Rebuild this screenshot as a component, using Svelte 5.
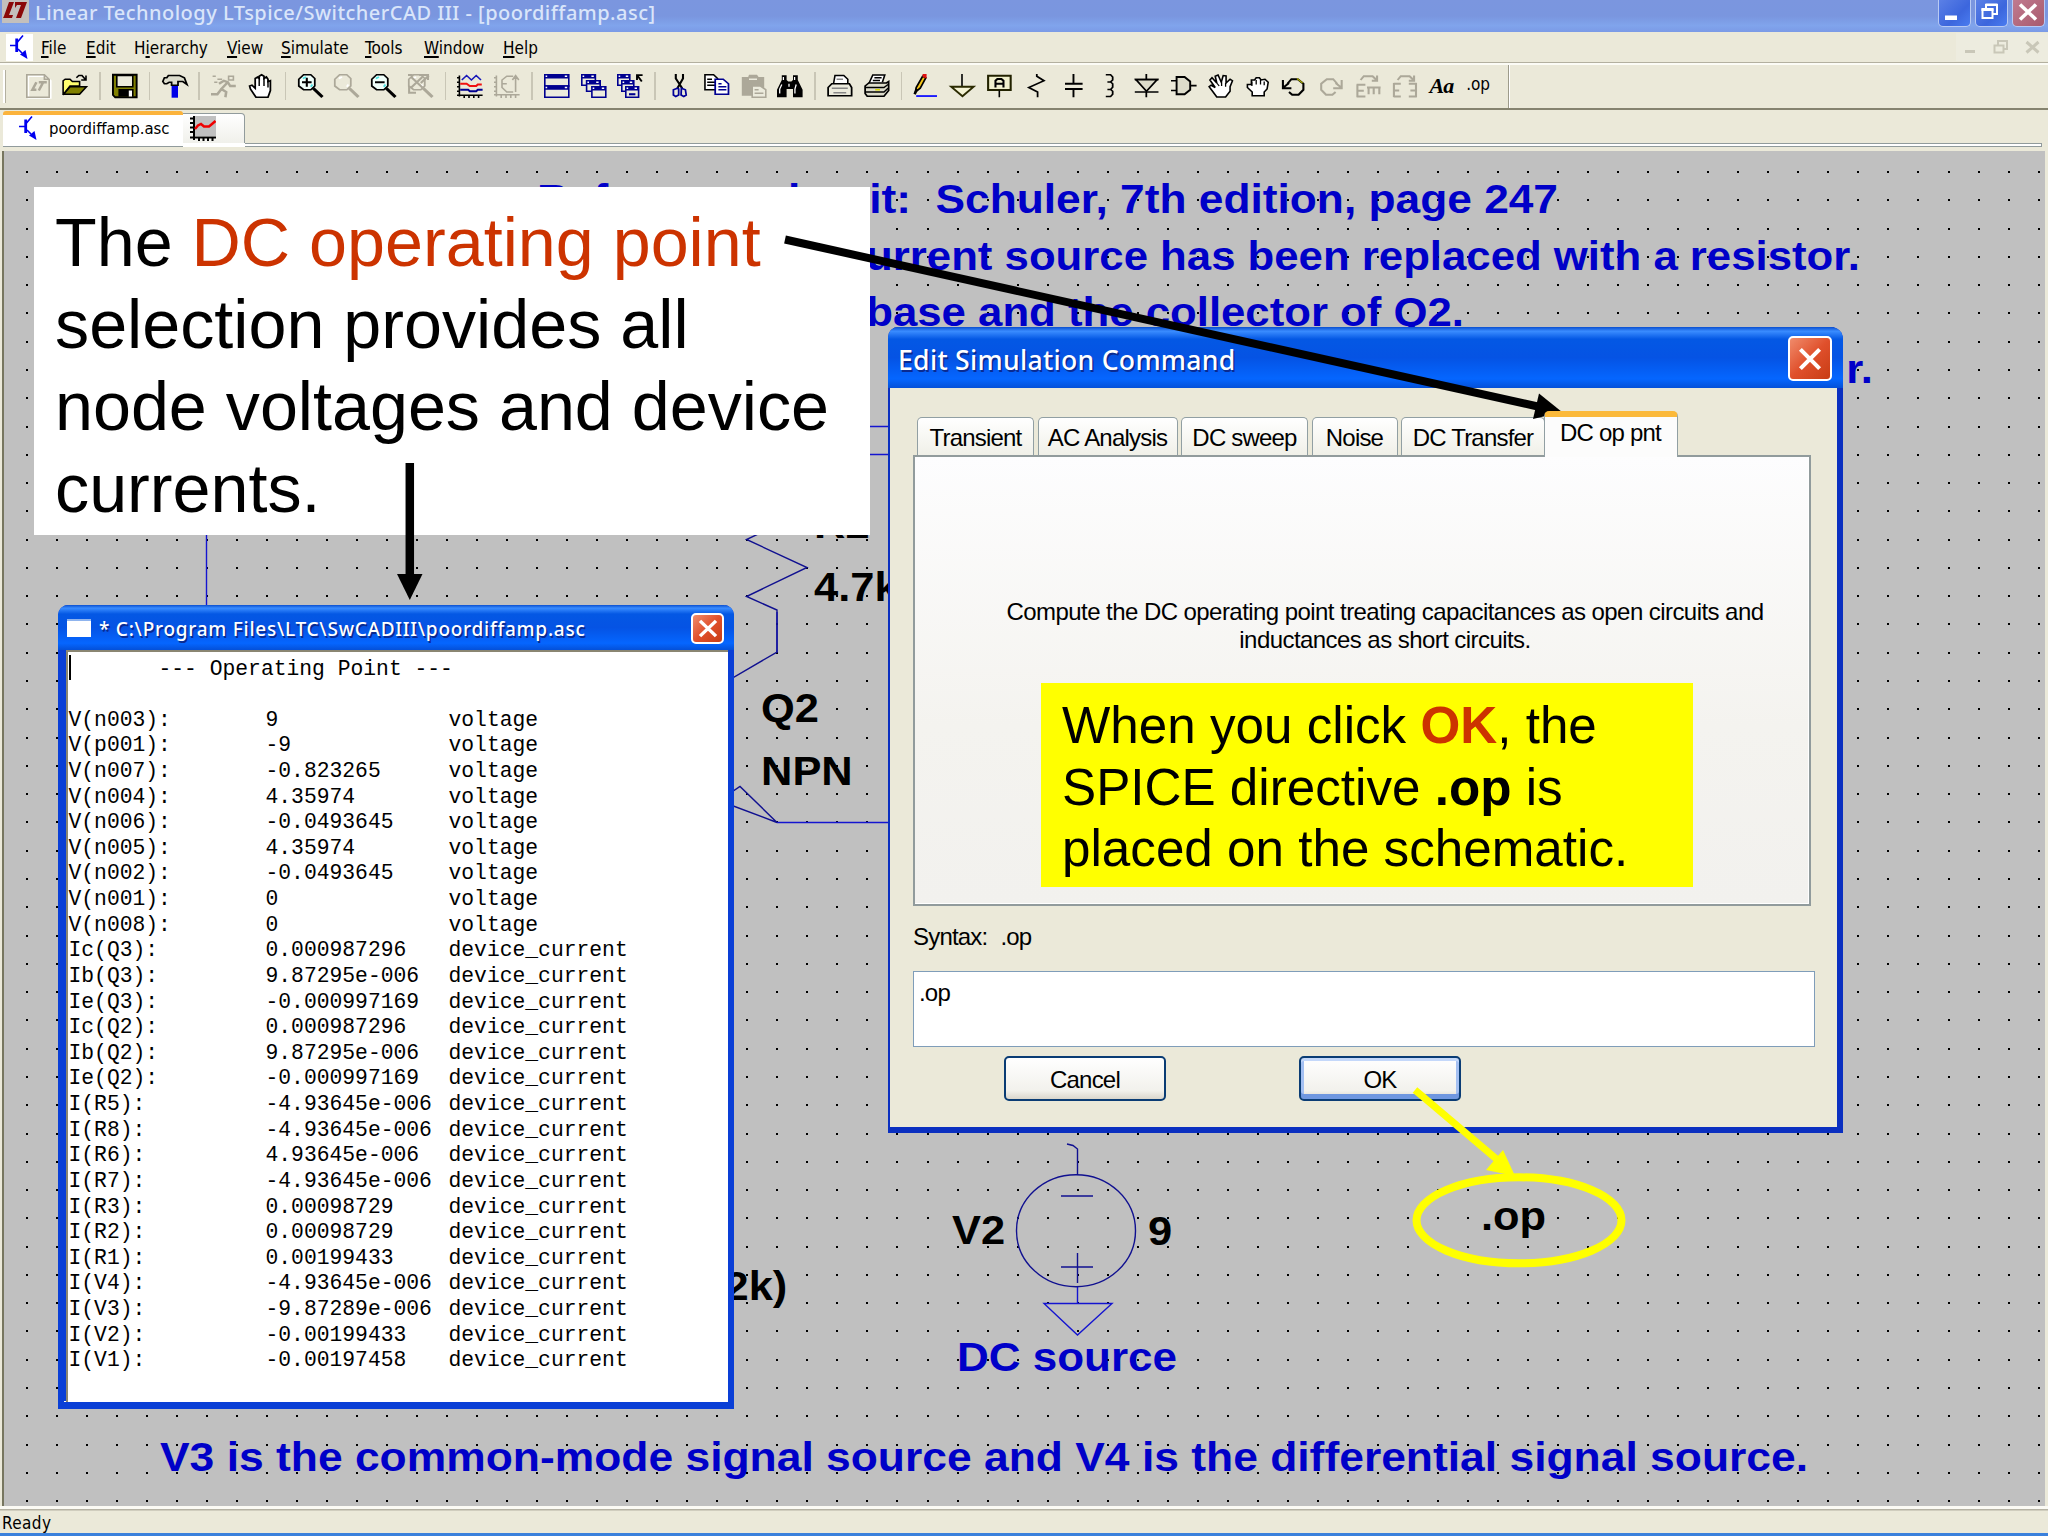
<script lang="ts">
    interface Shape {
        d: string,
        f?: string,
        s?: string,
        w?: number,
    }

    const GRAY = "#aca899";
    const NAVY = "#000090";
    const LENS = "M5.5 .5H8L10.5 3V8L8 10.5H3.5L.5 8V3.5L3.5 .5Z";

    // a small window frame with a solid caption
    function frame(x: number, y: number, w: number, h: number): Shape[] {
        return [
            { d: `M${x} ${y}h${w}v${h}h${-w}z`, f: NAVY },
            { d: `M${x + 1} ${y + 3}h${w - 2}v${h - 4}h${2 - w}z`, f: "#ecebdd" },
            { d: `M${x + 1} ${y + 1}h1v1h-1zM${x + w - 3} ${y + 1}h1.5v1h-1.5z`, f: "#fff" },
        ];
    }

    function lens(color: string, fill: string, mark: string): Shape[] {
        return [
            { d: LENS, f: fill, s: color, w: 1.1 },
            { d: "M3 3L5 2M8 8.5L9 7", s: fill == "none" ? "#fff" : "#4fe0e0", w: 1.2 },
            { d: mark, s: color, w: 1.3 },
            { d: "M9.5 9.5L15.3 15.3", s: color, w: 2 },
        ];
    }

    // all glyphs sit on a 16 x 16 grid
    const icons: Record<string, Shape[]> = {
        new: [
            { d: "M1.5 1.5H12.5L15.5 4.5V16H1.5Z", s: "#fff" },
            { d: "M.5 .5H11.5L14.5 3.5V15.5H.5ZM11.5 .5V3.5H14.5", s: GRAY },
            { d: "M6.5 5.5L4 10.5H6.5M8 5.5H13M10.5 6L8 11", s: GRAY, w: 1.6 },
        ],
        open: [
            { d: "M.7 13V4.5L2 3.5H5L6.5 5H11V8H5L1 13.5Z", f: "#ffff70", s: "#000" },
            { d: "M1 13.5L5 8.5H15.3L11 13.5Z", f: "#808000", s: "#000" },
            { d: "M9 2.5L10.5 1H12.5L14.5 3.5M12 4H15V1", s: "#000" },
        ],
        save: [
            { d: "M.6 .5H15.4V15.5H2L.6 14Z", f: "#808000", s: "#000", w: 1.2 },
            { d: "M3 1H13V8.5H3Z", f: "#ecebdd", s: "#000" },
            { d: "M4 10H13.5V15H4Z", f: "#000" },
            { d: "M10.5 11H12.5V15H10.5Z", f: "#fff" },
        ],
        hammer: [
            { d: "M.5 5L1.5 2.5H3L4 1H11L14 2.5L15.6 7L13 5H10V7.5H6V5.5H4.5L3 6.5H1.5Z", f: "#dcdccc", s: "#000", w: 1.1 },
            { d: "M6 8H10V15.8H6Z", f: "#0000e8" },
        ],
        run: [
            { d: "M11 1.5H14V4H11ZM1 1.5H3M4 3.5H7M2 5.5H4", s: GRAY },
            { d: "M5 6.5L8 4.5L10.5 5.5L12 8H15.5M10 6L6.5 10L9.5 12L9 15.5M6.5 10L4 13.5H0", s: GRAY, w: 1.6 },
        ],
        hand: [
            { d: "M5 15.5L1.5 10L1 8L2.5 7.5L4.5 9.5V3L6 2L7 3V1.5L8.5 .5L10 1.5V3L11.5 2L12.5 3.5V5L14 4.5V11L12.5 15.5Z", f: "#fff", s: "#000", w: 1.1 },
            { d: "M7 3V8M10 3V8M12.5 4.5V9", s: "#000", w: .9 },
        ],
        zoomin: lens("#000", "#f0fffa", "M5.5 2.5V8.5M2.5 5.5H8.5"),
        zoomfull: lens(GRAY, "none", "M0 0"),
        zoomout: lens("#000", "#f0fffa", "M2.5 5.5H8.5"),
        zoomfit: [...lens(GRAY, "none", "M2 2L9 9M9 2L2 9"), { d: "M0 .7H3M7 .7H12.5V4M.7 8V12.5H5M8 6L13 1", s: GRAY, w: 1.3 }],
        wave: [
            { d: "M1.5 1V15M0 14.2H16M0 2.5H2M0 5.5H2M0 8.5H2M0 11.5H2M4.5 14V16M7.5 14V16M10.5 14V16M13.5 14V16", s: "#000" },
            { d: "M3 4L6 1L9 4L12 1L15 4", s: "#1818b8", w: 1 },
            { d: "M2 6.5H6L8 8H12L13 7H15.5", s: "#f01010", w: 1.3 },
            { d: "M2 10.5H7L8 11.5H12L13 10.5H16", s: NAVY, w: 1.2 },
        ],
        fft: [
            { d: "M1.5 1V15M0 13.8H16M0 2.5H2M0 5.5H2M0 8.5H2M0 11.5H2M4.5 14V16M7.5 14V16M10.5 14V16M13.5 14V16", s: GRAY },
            { d: "M12 1.5H8L5 4V9L8 12H12M13.5 2V12M11.5 4L13.5 1L15.5 4M5 6.5H8", s: GRAY },
        ],
        tile: [...frame(0, 0, 16, 8.5), ...frame(0, 7.5, 16, 8.5)],
        cascade: [...frame(0, 0, 9.5, 8), ...frame(3, 4, 9.5, 8), ...frame(6.3, 8, 9.7, 8)],
        closeall: [
            ...frame(0, 0, 8.5, 8), ...frame(2.5, 4, 8.5, 8), ...frame(5, 8, 9, 8),
            { d: "M7.5 13.5H11.5", s: NAVY, w: 1.4 },
            { d: "M12.5 4V.7H16M12.5 .7L15.5 5", s: "#000", w: 1.2 },
        ],
        cut: [
            { d: "M5.5 0V3L9.5 9.5M10 0V3L6.5 9.5", s: "#000", w: 1.3 },
            { d: "M6.5 9.5L4 10.5V14L5.5 15L7.3 14V10ZM9 9.5L11.5 10.5L12 14L10.5 15L8.8 14Z", s: "#000098", w: 1.1 },
        ],
        copy: [
            { d: "M.6 .5H6L8.5 3V10.5H.6Z", f: "#fff", s: "#000" },
            { d: "M2 3.5H5M2 5.5H7M2 7.5H7", s: "#000" },
            { d: "M7 3.5H12L15.3 6.5V13.5H7Z", f: "#fff", s: NAVY, w: 1.1 },
            { d: "M9 6.5H11M9 8.5H14M9 10.5H14", s: NAVY },
        ],
        paste: [
            { d: "M.5 2H4.5L5 .5H10L11 2H14.5V14.5H.5Z", f: GRAY },
            { d: "M5 3.5H10", s: "#ecebdd" },
            { d: "M7 8H12L15.5 10.5V15.5H7Z", f: "#ecebdd", s: GRAY },
            { d: "M8.5 10.5H11M8.5 12.8H14", s: GRAY },
        ],
        find: [
            { d: "M3 .8H6V4L7 5H9L10 4V.8H13V4L16 10.5V15.5H10V10H6V15.5H0V10.5L3 4Z", f: "#000" },
            { d: "M4 2V4M11 2V4M3 7L1.7 10V13M7.5 6.5V8.5M12 7L11.2 10V13", s: "#fff", w: .8 },
        ],
        setup: [
            { d: "M4 7L5 1H10.5L13 3.5V7", f: "#fff", s: "#000" },
            { d: "M.7 9L3 6.5H14L15.4 9V14.5H.7Z", f: "#ecebdd", s: "#000", w: 1.1 },
            { d: "M6 3.5H10M3 9.5H13M4 12.5H12", s: "#888", w: .9 },
        ],
        print: [
            { d: "M3 6.5L5.5 .7H13L11.5 5.5", f: "#fff", s: "#000" },
            { d: "M.7 8L3 6H14L15.4 5V11L12.5 14.8H2L.7 13Z", f: "#dddccb", s: "#000", w: 1.1 },
            { d: "M6.5 2.5H11M5.5 4.3H10M1 9H12.5L15 7M1 12H12.5L15 9.5", s: "#000", w: .9 },
            { d: "M7 10.5H10", s: "#d8d800" },
        ],
        pencil: [
            { d: "M1.5 12L2 9L6 1.5L8 2.5L4.5 9.5Z", f: "#f5c518", s: "#000", w: 1.1 },
            { d: "M6 0H8.5V3L6 2Z", f: "#e01010" },
            { d: "M1 13.5L2.5 10", s: "#000", w: 1.6 },
            { d: "M2 14.7H15", s: "#1010ff", w: 1.2 },
        ],
        ground: [
            { d: "M7.5 0V8", s: "#000" },
            { d: "M.7 8.5H14.8L7.8 14.8Z", f: "#f4f3d4", s: "#2a2a00", w: 1.2 },
        ],
        label: [
            { d: "M.7 1.2H14.8V10.6H.7Z", f: "#f0efcc", s: "#222200", w: 1.3 },
            { d: "M5.3 9V4.5L6.5 3.3H9L10.3 4.5V9M5.3 6.5H10.3", s: "#000", w: 1.3 },
            { d: "M7.7 11V15.5", s: "#000" },
        ],
        resistor: [{ d: "M8 0V1.5L12.5 4.5L3 9L8.5 12V15.5", s: "#000", w: 1.1 }],
        cap: [{ d: "M7.8 0V6.3M7.8 10.5V15.5M2.5 6.5H13.5M2.5 10H13.5", s: "#000", w: 1.2 }],
        inductor: [{ d: "M5.5 .5H8.5L9.8 2V4L8.5 5.3H6.5H8.5L9.8 6.5V8.8L8.5 10.3H6.5H8.5L9.8 11.5V13.5L8.5 15H5.5", s: "#000", w: 1.1 }],
        diode: [
            { d: "M7.7 0V4M7.7 12V15.5M.5 12H15.3M.5 3.7H15.3", s: "#000", w: 1.1 },
            { d: "M1.2 3.7H14.5L7.8 11.5Z", f: "#dddccb", s: "#000", w: 1.1 },
        ],
        gate: [
            { d: "M3.5 2H8.5L12 5V10.5L8.5 13.5H3.5Z", f: "#dddccb", s: "#000", w: 1.2 },
            { d: "M0 4.5H3.5M0 11H3.5M12 7.7H16", s: "#000", w: 1.1 },
        ],
        move: [
            { d: "M5.5 15.3L2.5 11L.7 8.5L2 7.5L4.5 9L1.2 4L2.5 2.5L5.5 6L4.5 1.5L6.3 .7L8.3 5.5L9.5 1L11.3 1.2V6L13.8 3.5L15.3 4.5L13.8 8.5V11.5L11 15.3Z", f: "#fff", s: "#000", w: 1 },
            { d: "M5.5 6L7 8M8.5 5.5V8M11 6V8.5", s: "#000", w: .8 },
        ],
        drag: [
            { d: "M4.5 14.5V12L1.5 9V7H4V4H6L7 2.5H9L10 4L12.5 3.5L14.5 5.5L13.8 10L12 12V14.5Z", f: "#fff", s: "#000", w: 1 },
            { d: "M4.3 5V8M7 4V7M9.7 4V7M12 5V7.5", s: "#000", w: .8 },
        ],
        undo: [
            { d: "M4 6.5L6.5 3.5H10.5L14 6.5V10.5L11 13.8H7L5 12", s: "#000", w: 1.3 },
            { d: "M1.2 4V9.5H6.5M1.5 9L5 6", s: "#000", w: 1.3 },
            { d: "M10 3L13.5 6", s: "#a8a800", w: .8 },
        ],
        redo: [{ d: "M12 6.5L9.5 3.5H5.5L2 6.5V10.5L5 13.8H9L11 12M14.8 4V9.5H9.5M14.5 9L11 6", s: GRAY, w: 1.3 }],
        rotate: [{ d: "M1.5 7V15.3M1 7.2H6.5M1 11.2H5.5M1 15H6.5M7.5 9H16M8.5 9V13.5M11.7 9V13.5M15.2 9V13.5M3.5 4L5.5 1.5H11L13.5 4M13.8 1V4.5H10.5", s: GRAY, w: 1.3 }],
        mirror: [{ d: "M1.2 6V15.3M1 6.5H5.5M1 11H4.5M1 15H5.5M15 6V15.3M15.5 6.5H10.5M15.5 11H11.5M15.5 15H10.5M3.5 4L5.5 1.5H11L13.5 4M13.8 1V4.5H10.5", s: GRAY, w: 1.3 }],
    };

    // "|" is a separator
    const toolbar = "new open | save | hammer | run hand | zoomin zoomfull zoomout zoomfit | wave fft | tile cascade closeall | cut copy paste find | setup print | pencil ground label resistor cap inductor diode gate move drag undo redo rotate mirror Aa .op".split(" ");

    // key is the index of the underlined letter
    const menus = [
        { text: "File", key: 0, width: 45 },
        { text: "Edit", key: 0, width: 48 },
        { text: "Hierarchy", key: 1, width: 93 },
        { text: "View", key: 0, width: 54 },
        { text: "Simulate", key: 0, width: 84 },
        { text: "Tools", key: 0, width: 59 },
        { text: "Window", key: 0, width: 79 },
        { text: "Help", key: 0, width: 40 },
    ];

    const tabs = [
        { text: "Transient", width: 117 },
        { text: "AC Analysis", width: 140 },
        { text: "DC sweep", width: 127 },
        { text: "Noise", width: 86 },
        { text: "DC Transfer", width: 144 },
    ];

    const results = [
        ["V(n003):", "9"],
        ["V(p001):", "-9"],
        ["V(n007):", "-0.823265"],
        ["V(n004):", "4.35974"],
        ["V(n006):", "-0.0493645"],
        ["V(n005):", "4.35974"],
        ["V(n002):", "-0.0493645"],
        ["V(n001):", "0"],
        ["V(n008):", "0"],
        ["Ic(Q3):", "0.000987296"],
        ["Ib(Q3):", "9.87295e-006"],
        ["Ie(Q3):", "-0.000997169"],
        ["Ic(Q2):", "0.000987296"],
        ["Ib(Q2):", "9.87295e-006"],
        ["Ie(Q2):", "-0.000997169"],
        ["I(R5):", "-4.93645e-006"],
        ["I(R8):", "-4.93645e-006"],
        ["I(R6):", "4.93645e-006"],
        ["I(R7):", "-4.93645e-006"],
        ["I(R3):", "0.00098729"],
        ["I(R2):", "0.00098729"],
        ["I(R1):", "0.00199433"],
        ["I(V4):", "-4.93645e-006"],
        ["I(V3):", "-9.87289e-006"],
        ["I(V2):", "-0.00199433"],
        ["I(V1):", "-0.00197458"],
    ];

    const notes = [
        { x: 537, y: 212.5, w: 1021, text: "Reference circuit:\u00a0 Schuler, 7th edition, page 247" },
        { x: 1860, y: 270, end: true, text: "current source has been replaced with a resistor." },
        { x: 1464, y: 326, end: true, text: "base and the collector of Q2." },
        { x: 1873, y: 382.5, end: true, text: "r." },
        { x: 957, y: 1371, w: 220, text: "DC source" },
        { x: 160, y: 1471, w: 1648, text: "V3 is the common-mode signal source and V4 is the differential signal source." },
    ];

    const labels = [
        { x: 814, y: 538, text: "R2" },
        { x: 814, y: 601, text: "4.7k" },
        { x: 761, y: 722, text: "Q2" },
        { x: 761, y: 785, text: "NPN" },
        { x: 952, y: 1244, text: "V2" },
        { x: 1148, y: 1245, text: "9" },
        { x: 710, y: 1300, text: "(2k)" },
        { x: 1481, y: 1230, text: ".op" },
    ];

    // grid dots of the schematic
    let dots = "";
    for (let row = 0; row < 48; row++) {
        for (let col = 0; col < 68; col++) {
            dots += `M${Math.round(25.6 + col * 30.03)} ${Math.round(171 + row * 28.28)}h1.6v1.5h-1.6z`;
        }
    }
</script>

{#snippet glyph(shapes: Shape[])}
    <svg class="glyph" viewBox="0 0 16 16" preserveAspectRatio="none">
        {#each shapes as p}
            <path d={p.d} fill={p.f ?? "none"} stroke={p.s ?? "none"} stroke-width={p.w ?? 1} />
        {/each}
    </svg>
{/snippet}

{#snippet transistor()}
    <svg class="npn" viewBox="0 0 20 26">
        <path d="M0 11.5H6M13 1.5L7.5 8M8 15L12 19" stroke="#0000f0" stroke-width="1.6" fill="none" />
        <path d="M6.7 4.5V18" stroke="#0000f0" stroke-width="2.8" />
        <path d="M15.5 16L17.5 25L10 20.5Z" fill="#0000f0" />
    </svg>
{/snippet}

{#snippet cross()}
    <svg viewBox="0 0 20 20" preserveAspectRatio="none"><path d="M2 2L18 18M18 2L2 18" stroke="#fff" stroke-width="3.4" /></svg>
{/snippet}

<div class="app">
    <header class="title">
        <svg class="logo" width="27" height="23" viewBox="0 0 27 23">
            <rect width="27" height="23" fill="#c4c0bc" />
            <path d="M7 2H12L7 15H11L10 18H1L2 16ZM13 2H25L19 18H14L19 5H15L13 8Z" fill="#8a0808" />
        </svg>
        <span class="apptitle">Linear Technology LTspice/SwitcherCAD III - [poordiffamp.asc]</span>
        <div class="winbtns">
            <span class="wb"><svg viewBox="0 0 33 27"><rect x="7" y="15.5" width="12" height="4.5" fill="#fff" /></svg></span>
            <span class="wb"><svg viewBox="0 0 33 27"><path d="M11 8V5H22V14H18.5M10.5 4.5H22.5M7.5 9.5H17.5V18H7.5Z" stroke="#fff" stroke-width="2" fill="none" /><path d="M6.5 9.5H18.5" stroke="#fff" stroke-width="3" /></svg></span>
            <span class="wb red"><svg viewBox="0 0 33 27"><path d="M8 4.5L24 19.5M24 4.5L8 19.5" stroke="#fff" stroke-width="3.6" /></svg></span>
        </div>
    </header>

    <nav class="menu">
        <span class="docicon">{@render transistor()}</span>
        {#each menus as m}
            <span class="menuitem" style="width: {m.width}px">{m.text.slice(0, m.key)}<u>{m.text[m.key]}</u>{m.text.slice(m.key + 1)}</span>
        {/each}
        <svg class="mdi" width="92" height="28" viewBox="0 0 92 28">
            <path d="M9 18.5H19" stroke="#c9c7b8" stroke-width="3" />
            <path d="M42 12V8H51V16H48M38.5 12.5H47.5V19.5H38.5Z" stroke="#c9c7b8" stroke-width="2" fill="none" />
            <path d="M70.5 9L82.5 19.5M82.5 9L70.5 19.5" stroke="#c9c7b8" stroke-width="3" />
        </svg>
    </nav>

    <div class="toolbar">
        <span class="grip"></span>
        {#each toolbar as t}
            {#if t == "|"}
                <span class="sep"></span>
            {:else if t == "Aa"}
                <span class="tool aa">Aa</span>
            {:else if t == ".op"}
                <span class="tool op">.op</span>
            {:else}
                <span class="tool">{@render glyph(icons[t])}</span>
            {/if}
        {/each}
        <span class="barend"></span>
    </div>

    <div class="doctabs">
        <div class="doctab active">{@render transistor()}<span>poordiffamp.asc</span></div>
        <div class="doctab plot">
            <svg width="26" height="25" viewBox="0 0 26 25">
                <rect x="4" width="22" height="20" fill="#c0c0c0" />
                <path d="M4 0V24M0 21.5H26M0 2.5H4M0 7H4M0 11.5H4M0 16H4M9 21V25M13.5 21V25M18 21V25M22.5 21V25" stroke="#000" stroke-width="2" />
                <path d="M5 13L8 9.5L11 8L14 10.5H19L22 8L25.5 5" stroke="#f00000" stroke-width="2.5" fill="none" />
            </svg>
        </div>
        <div class="rest"></div>
    </div>

    <main class="canvas">
        <svg class="schematic" width="2041" height="1355" viewBox="4 151 2041 1355">
            <path d={dots} fill="#000" shape-rendering="crispEdges" />
            <g class="wires">
                <path d="M206.5 400V640M600 426.5H900M600 454.5H900M777 652.5V612M777 822.5H900M1077.5 1287V1303M1044 1303.5H1112L1077.5 1335Z" />
            </g>
            <g class="parts">
                <path d="M777 525L746.5 539.5L807 567.5L746.5 596.5L777 610V652L700 697" />
                <path d="M720 800L740 786.5L777 822.5L720 801" />
                <path d="M1067 1144L1073 1145.5L1077.5 1149V1175M1061 1196H1093M1061 1267H1093M1077.5 1253V1283" />
                <ellipse cx="1076" cy="1230.7" rx="59.5" ry="56" />
            </g>
            <g class="notes">
                {#each notes as n}
                    {#if n.end}
                        <text transform="translate({n.x} {n.y}) scale(1.067 1)" text-anchor="end">{n.text}</text>
                    {:else}
                        <text x={n.x} y={n.y} textLength={n.w} lengthAdjust="spacingAndGlyphs">{n.text}</text>
                    {/if}
                {/each}
            </g>
            <g class="labels">
                {#each labels as l}
                    <text transform="translate({l.x} {l.y}) scale(1.06 1)">{l.text}</text>
                {/each}
            </g>
        </svg>
    </main>

    <footer class="status">Ready</footer>
    <div class="taskbar"></div>

    <section class="output">
        <div class="caption">
            <span class="page"></span>
            <span class="path">* C:\Program Files\LTC\SwCADIII\poordiffamp.asc</span>
            <span class="close">{@render cross()}</span>
        </div>
        <div class="log">
            <span class="caret"></span>
            <div class="head">--- Operating Point ---</div>
            {#each results as [name, value]}
                <div class="row">
                    <span>{name}</span>
                    <span>{value}</span>
                    <span>{name[0] == "V" ? "voltage" : "device_current"}</span>
                </div>
            {/each}
        </div>
    </section>

    <section class="dialog">
        <div class="caption">
            <span class="path">Edit Simulation Command</span>
            <span class="close">{@render cross()}</span>
        </div>
        <div class="body">
            <div class="tabs">
                {#each tabs as t}
                    <span class="tab" style="width: {t.width}px">{t.text}</span>
                {/each}
                <span class="tab current">DC op pnt</span>
            </div>
            <div class="pane">
                <p>Compute the DC operating point treating capacitances as open circuits and</p>
                <p>inductances as short circuits.</p>
            </div>
            <div class="syntax"><span>Syntax:</span><span>.op</span></div>
            <div class="field">.op</div>
            <div class="buttons">
                <span class="btn">Cancel</span>
                <span class="btn default">OK</span>
            </div>
        </div>
    </section>

    <div class="callout white">
        The <em>DC operating point</em><br />selection provides all<br />node voltages and device<br />currents.
    </div>
    <div class="callout yellow">
        When you click <em><b>OK</b></em>, the<br />SPICE directive <b>.op</b> is<br />placed on the schematic.
    </div>

    <svg class="arrows" width="2048" height="1536" viewBox="0 0 2048 1536">
        <path d="M785 239.5L1540 407" stroke="#000" stroke-width="8" />
        <path d="M1562 412L1539 393.5L1533 419Z" fill="#000" />
        <path d="M409.8 463V578" stroke="#000" stroke-width="8.5" />
        <path d="M409.8 600L397 574H422.5Z" fill="#000" />
        <g stroke="#ff0" fill="none">
            <path d="M1415 1090L1500 1162" stroke-width="7" />
            <ellipse cx="1519" cy="1220.3" rx="102.5" ry="43" stroke-width="8" />
        </g>
        <path d="M1515 1176L1503 1150L1486 1170Z" fill="#ff0" />
    </svg>
</div>

<style>
    :global(body) {
        margin: 0;
        overflow: hidden;
    }

    .app {
        position: relative;
        width: 2048px;
        height: 1536px;
        display: flex;
        flex-direction: column;
        background: #ebe9d9;
        overflow: hidden;
        font-family: "DejaVu Sans Condensed", "DejaVu Sans", sans-serif;
        font-stretch: condensed;
        color: #000;
    }

    .title {
        height: 32px;
        flex: none;
        display: flex;
        align-items: flex-start;
        padding-left: 2px;
        background: linear-gradient(#7b96df, #7a96df 50%, #80a4ec 80%, #7b9ae6 100%);
    }

    .apptitle {
        margin-left: 6px;
        line-height: 26px;
        font-family: "Noto Sans", sans-serif;
        font-stretch: normal;
        font-weight: 500;
        font-size: 20px;
        letter-spacing: .47px;
        color: #d9e5fa;
        white-space: nowrap;
    }

    .winbtns {
        margin-left: auto;
        display: flex;
        gap: 4px;
        padding-right: 3px;
    }

    .wb {
        width: 33px;
        height: 27px;
        box-sizing: border-box;
        border: 1.5px solid #b8caf4;
        border-top: 0;
        border-radius: 0 0 5px 5px;
        background: linear-gradient(135deg, #5b80e6, #3c66dd 60%, #4a7cf0);
    }

    .wb svg {
        display: block;
        width: 33px;
        height: 27px;
        margin-left: -1px;
    }

    .wb.red {
        background: linear-gradient(135deg, #c07a90, #a85a6c);
    }

    .menu {
        height: 31px;
        flex: none;
        display: flex;
        align-items: center;
        font-size: 17px;
        border-bottom: 1.5px solid #b3b0a0;
        box-sizing: border-box;
    }

    .docicon {
        width: 27px;
        height: 27px;
        margin: 0 8px 0 6px;
        background: #fff;
        display: flex;
        justify-content: center;
    }

    .npn {
        width: 20px;
        height: 26px;
        flex: none;
    }

    .menuitem {
        flex: none;
        white-space: nowrap;
        padding-top: 1px;
    }

    u {
        text-decoration-thickness: 1.5px;
        text-underline-offset: 2px;
    }

    .mdi {
        margin-left: auto;
        background: #edecdf;
    }

    .toolbar {
        height: 47px;
        flex: none;
        display: flex;
        align-items: center;
        border-top: 2px solid #fcfcf6;
        border-bottom: 2.5px solid #85836f;
        box-sizing: border-box;
        padding-bottom: 1px;
    }

    .grip {
        width: 2px;
        height: 33px;
        margin: 0 14px 0 3px;
        border-right: 1.5px solid #b3b0a0;
        background: #fff;
    }

    .tool {
        width: 36.8px;
        height: 24px;
        display: flex;
        justify-content: center;
        align-items: center;
        flex: none;
    }

    .glyph {
        width: 25.6px;
        height: 24px;
        overflow: visible;
    }

    .sep {
        width: 1.5px;
        height: 28px;
        margin: 0 5.65px;
        background: #c9c6b6;
        flex: none;
    }

    .aa {
        font: italic bold 22px "Liberation Serif", serif;
        letter-spacing: -1px;
    }

    .op {
        font-size: 17px;
        line-height: 20px;
        padding-bottom: 4px;
        height: 20px;
    }

    .barend {
        width: 1px;
        height: 43px;
        margin-left: 11px;
        border-left: 1.5px solid #9d9b8b;
        background: #fff;
    }

    .doctabs {
        height: 41px;
        flex: none;
        display: flex;
        align-items: flex-start;
        margin: 1px 6px 0 3px;
        box-sizing: border-box;
    }

    .doctab.active {
        width: 180px;
        height: 36px;
        box-sizing: border-box;
        border-top: 4px solid #fbb33c;
        border-bottom: 1.5px solid #919b9c;
        border-radius: 3px 3px 0 0;
        background: #fff;
        display: flex;
        align-items: center;
        gap: 10px;
        padding: 0 0 5px 16px;
        font-size: 16.6px;
    }

    .doctab.plot {
        width: 62px;
        height: 32px;
        margin-top: 2px;
        box-sizing: border-box;
        border: 1.5px solid #919b9c;
        border-left: 0;
        border-radius: 0 4px 0 0;
        background: linear-gradient(#fff, #f0f0ea);
        padding: 2px 0 0 7px;
    }

    .doctab.active span {
        white-space: nowrap;
    }

    .rest {
        flex: 1;
        height: 2px;
        margin-top: 32px;
        border: 1.5px solid #919b9c;
        border-left: 0;
        background: #fff;
        box-shadow: -62px 0 0 0 #fff;
    }

    .canvas {
        height: 1355px;
        flex: none;
        margin-top: -1px;
        border-left: 2px solid #77765f;
        margin-left: 2px;
        margin-right: 3px;
        background: #c0c0c0;
        display: flex;
        overflow: hidden;
    }

    .schematic {
        flex: none;
    }

    .wires path {
        fill: none;
        stroke: #1414d0;
        stroke-width: 1.4;
    }

    .parts path,
    .parts ellipse {
        fill: none;
        stroke: #101090;
        stroke-width: 1.4;
    }

    .schematic text {
        font-family: "Liberation Sans", Arial, sans-serif;
        font-weight: bold;
        font-size: 41px;
    }

    .notes text {
        fill: #0000c8;
    }

    .status {
        height: 27px;
        flex: none;
        box-sizing: border-box;
        border-top: 3px solid #fbfaf4;
        box-shadow: inset 0 1.5px 0 #b5b2a3;
        padding-left: 2px;
        line-height: 29px;
        font-size: 17px;
        letter-spacing: .4px;
    }

    .taskbar {
        height: 3px;
        flex: none;
        background: #3a80dc;
    }

    .output {
        position: absolute;
        left: 58px;
        top: 605px;
        width: 676px;
        height: 804px;
        box-sizing: border-box;
        display: flex;
        flex-direction: column;
        border: solid #0a3fd6;
        border-width: 0 6px 7px;
        border-radius: 10px 10px 0 0;
        background: #0a3fd6;
        box-shadow: inset 0 -1px 0 #fff, inset -1px 0 0 #fff;
    }

    .caption {
        display: flex;
        align-items: center;
        color: #fff;
        font-family: "Noto Sans", sans-serif;
        font-stretch: normal;
        font-weight: 500;
        white-space: nowrap;
        text-shadow: 1.5px 1.5px 0 #0a2a90;
        background: linear-gradient(#0a4fd0, #3a8cff 7%, #0458e4 20%, #0553e4 50%, #0566ff 85%, #0450d8);
    }

    .output .caption {
        height: 45px;
        margin: 0 -6px;
        padding: 2px 10px 0 9px;
        border-radius: 10px 10px 0 0;
        box-sizing: border-box;
        font-size: 19px;
        letter-spacing: .75px;
        flex: none;
    }

    .page {
        width: 24px;
        height: 18px;
        background: #fff;
        border-top: 2px solid #8fb4ee;
        box-sizing: border-box;
        margin: 0 8px 2px 0;
    }

    .close {
        margin-left: auto;
        box-sizing: border-box;
        border: 2px solid #fff;
        border-radius: 5px;
        background: linear-gradient(135deg, #f08c6c, #e0502c 50%, #c83c14);
        display: flex;
        justify-content: center;
        align-items: center;
    }

    .output .close {
        width: 33px;
        height: 31px;
    }

    .output .close svg {
        width: 20px;
        height: 19px;
    }

    .log {
        flex: 1;
        position: relative;
        margin-left: 2px;
        background: #fff;
        border-top: 2.5px solid #8a8672;
        border-left: 2px solid #8a8672;
        padding-left: .5px;
        font: 21.33px "Liberation Mono", "Courier New", monospace;
        line-height: 25.62px;
    }

    .caret {
        position: absolute;
        left: 1px;
        top: 3px;
        width: 1.5px;
        height: 25px;
        background: #000;
    }

    .head {
        padding: 4.5px 0 25.6px 90px;
        white-space: pre;
    }

    .row {
        display: grid;
        grid-template-columns: 197px 183px 1fr;
    }

    .dialog {
        position: absolute;
        left: 888px;
        top: 327px;
        width: 955px;
        height: 806px;
        box-sizing: border-box;
        display: flex;
        flex-direction: column;
        border: solid #0a2fc0;
        border-width: 0 6px 6px 2px;
        border-radius: 10px 12px 0 0;
        background: #0a2fc0;
    }

    .dialog .caption {
        height: 61px;
        flex: none;
        margin: 0 -6px 0 -2px;
        padding: 4px 11px 0 10px;
        box-sizing: border-box;
        border-radius: 10px 12px 0 0;
        font-size: 26.6px;
        letter-spacing: .3px;
    }

    .dialog .close {
        width: 44px;
        height: 45px;
        margin-bottom: 2px;
    }

    .dialog .close svg {
        width: 24px;
        height: 24px;
    }

    .body {
        flex: 1;
        display: flex;
        flex-direction: column;
        background: #ebe9d9;
        padding: 24px 22px 0 23px;
        font-family: "Liberation Sans", Arial, sans-serif;
        font-stretch: normal;
        font-size: 24px;
        letter-spacing: -.8px;
    }

    .tabs {
        display: flex;
        align-items: flex-end;
        height: 43px;
        gap: 3.5px;
        padding-left: 4px;
    }

    .tab {
        height: 38px;
        box-sizing: border-box;
        border: 1.5px solid #919fa3;
        border-bottom: 0;
        border-radius: 5px 5px 0 0;
        background: linear-gradient(#fff, #f0f0e8);
        text-align: center;
        line-height: 39px;
        white-space: nowrap;
    }

    .tab.current {
        width: 134px;
        height: 46px;
        margin: 0 0 -2px -5px;
        border-top: 6px solid #fbb93a;
        background: #fcfcfc;
        line-height: 32px;
        z-index: 1;
    }

    .pane {
        height: 451px;
        width: 898px;
        box-sizing: border-box;
        border: 2px solid #919b9c;
        background: linear-gradient(#fdfdfe, #f4f3ef 60%, #f2f1ee);
        padding-top: 141px;
        text-align: center;
        box-shadow: inset -1px -1px 0 #fff;
    }

    .pane p {
        margin: 0;
        line-height: 28px;
        padding-left: 46px;
        letter-spacing: -.56px;
    }

    .syntax {
        display: flex;
        gap: 13px;
        margin-top: 17px;
        line-height: 28px;
    }

    .field {
        width: 902px;
        height: 76px;
        margin: 20px 0 0 0;
        box-sizing: border-box;
        border: 1.5px solid #7f9db9;
        background: #fff;
        padding: 7px 5px;
        line-height: 28px;
    }

    .buttons {
        display: flex;
        gap: 133px;
        margin: 9px 0 0 91px;
    }

    .btn {
        width: 162px;
        height: 45px;
        box-sizing: border-box;
        border: 2px solid #0a3c74;
        border-radius: 5px;
        background: linear-gradient(#fff, #f2f1ec 80%, #dad6cc);
        text-align: center;
        line-height: 43px;
    }

    .btn.default {
        box-shadow: inset 0 3px 0 #c4d8fa, inset 0 -5px 0 #6f97e0, inset 3px 0 0 #a4c0f2, inset -3px 0 0 #a4c0f2;
    }

    .callout {
        position: absolute;
        box-sizing: border-box;
        font-family: "Liberation Sans", Arial, sans-serif;
        font-stretch: normal;
        white-space: nowrap;
    }

    .callout em {
        font-style: normal;
        color: #cc3300;
    }

    .white {
        left: 34px;
        top: 187px;
        width: 836px;
        height: 348px;
        padding: 14px 21px;
        background: #fff;
        font-size: 68.27px;
        line-height: 82px;
    }

    .yellow {
        left: 1041px;
        top: 683px;
        width: 652px;
        height: 204px;
        padding: 12px 21px;
        background: #ff0;
        font-size: 51.2px;
        line-height: 61.7px;
    }

    .arrows {
        position: absolute;
        left: 0;
        top: 0;
    }
</style>
